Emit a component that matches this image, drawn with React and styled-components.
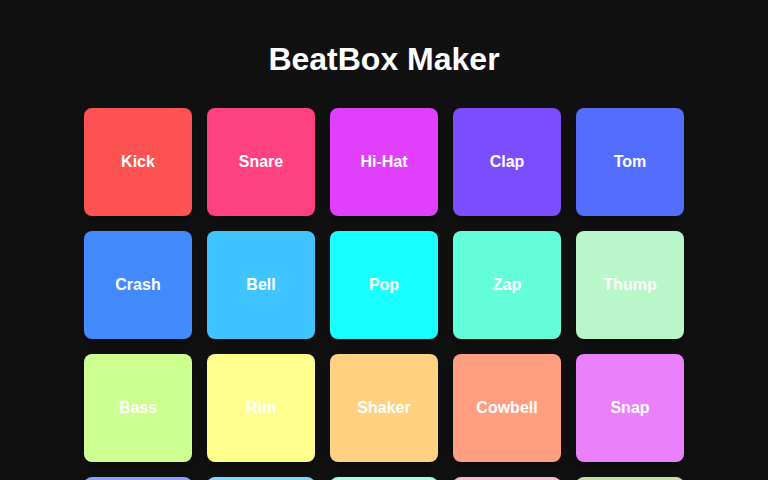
import React from "react";
import styled, { createGlobalStyle } from "styled-components";

const pads = [
  { name: "Kick", color: "#ff5252" },
  { name: "Snare", color: "#ff4081" },
  { name: "Hi-Hat", color: "#e040fb" },
  { name: "Clap", color: "#7c4dff" },
  { name: "Tom", color: "#536dfe" },
  { name: "Crash", color: "#448aff" },
  { name: "Bell", color: "#40c4ff" },
  { name: "Pop", color: "#18ffff" },
  { name: "Zap", color: "#64ffda" },
  { name: "Thump", color: "#b9f6ca" },
  { name: "Bass", color: "#ccff90" },
  { name: "Rim", color: "#ffff8d" },
  { name: "Shaker", color: "#ffd180" },
  { name: "Cowbell", color: "#ff9e80" },
  { name: "Snap", color: "#ea80fc" },
  { name: "Blip", color: "#8c9eff" },
  { name: "Ping", color: "#80d8ff" },
  { name: "Chime", color: "#a7ffeb" },
  { name: "Pluck", color: "#f8bbd0" },
  { name: "Thud", color: "#c5e1a5" },
];

const App = () => {
  return (
    <>
      <GlobalStyle />
      <Wrapper>
        <Title>BeatBox Maker</Title>
        <Grid>
          {pads.map((pad) => (
            <Pad key={pad.name} $color={pad.color}>
              {pad.name}
            </Pad>
          ))}
        </Grid>
      </Wrapper>
    </>
  );
};

const GlobalStyle = createGlobalStyle`
  body {
    margin: 0;
    background-color: #111111;
    font-family: "Liberation Sans", Arial, sans-serif;
    overflow: hidden;
  }
`;

const Wrapper = styled.div`
  display: flex;
  flex-direction: column;
  align-items: center;
  padding-top: 41px;
`;

const Title = styled.h1`
  margin: 0 0 30px;
  color: #ffffff;
  font-size: 32px;
  line-height: 37px;
  font-weight: bold;
`;

const Grid = styled.div`
  display: grid;
  grid-template-columns: repeat(5, 108px);
  grid-auto-rows: 108px;
  gap: 15px;
`;

const Pad = styled.button`
  display: flex;
  align-items: center;
  justify-content: center;
  border: none;
  border-radius: 8px;
  background-color: ${(p) => p.$color};
  color: #ffffff;
  font-family: "Liberation Sans", Arial, sans-serif;
  font-size: 16px;
  font-weight: bold;
  box-shadow: 0 4px 8px rgba(0, 0, 0, 0.4);
  cursor: pointer;
`;

export default App;
